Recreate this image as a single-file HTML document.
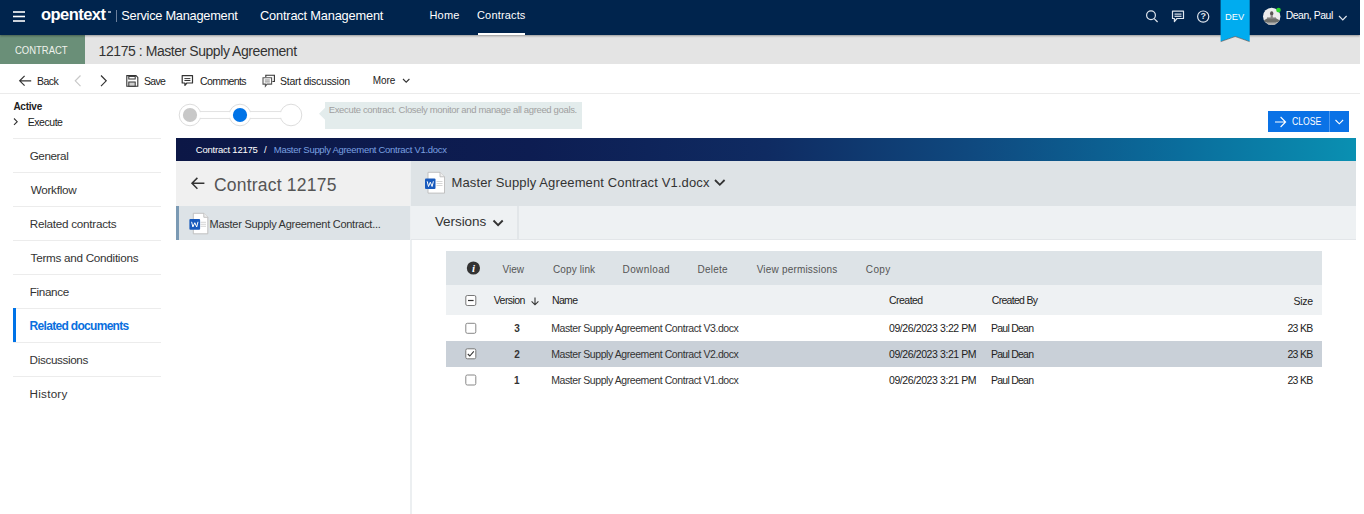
<!DOCTYPE html>
<html><head><meta charset="utf-8">
<style>
*{box-sizing:border-box;margin:0;padding:0}
html,body{width:1364px;height:514px;overflow:hidden;background:#fff;font-family:"Liberation Sans",sans-serif;color:#333}
.t{position:absolute;white-space:nowrap;line-height:normal}
.a{position:absolute}
svg{position:absolute;overflow:visible}
</style></head><body>
<div class="a" style="left:0;top:35px;width:1360px;height:29px;background:#e4e4e4"></div>
<div class="a" style="left:0;top:35px;width:85px;height:29px;background:#6a8f78"></div>
<!-- NAV -->
<div class="a" style="left:0;top:0;width:1360px;height:35px;background:#00244d;box-shadow:0 1px 2px rgba(0,0,0,.35)"></div>
<svg style="left:0;top:0" width="30" height="35"><g stroke="#fff" stroke-width="1.6"><line x1="13" y1="12" x2="25" y2="12"/><line x1="13" y1="16.5" x2="25" y2="16.5"/><line x1="13" y1="21" x2="25" y2="21"/></g></svg>
<div class="t" style="left:40.9px;top:4.57px;font-size:16.5px;font-weight:bold;letter-spacing:-0.52px;color:#fff;">opentext</div>
<div class="a" style="left:108px;top:11.2px;width:3px;height:1.6px;background:#9aa8bc"></div>
<div class="a" style="left:116px;top:9.5px;width:1px;height:12.5px;background:#6b7f9c"></div>
<div class="t" style="left:121.3px;top:7.62px;font-size:12.8px;font-weight:normal;letter-spacing:-0.26px;color:#fff;">Service Management</div>
<div class="t" style="left:260.0px;top:7.62px;font-size:12.8px;font-weight:normal;letter-spacing:-0.18px;color:#fff;">Contract Management</div>
<div class="t" style="left:429.4px;top:9.08px;font-size:11.0px;font-weight:normal;letter-spacing:0.23px;color:#fff;">Home</div>
<div class="t" style="left:477.0px;top:9.08px;font-size:11.0px;font-weight:normal;letter-spacing:0.16px;color:#fff;">Contracts</div>
<div class="a" style="left:478px;top:33px;width:47px;height:2px;background:#fff"></div>
<svg style="left:1140px;top:0" width="80" height="35" fill="none" stroke="#dfe6ee" stroke-width="1.2">
 <circle cx="11" cy="15.3" r="4.4"/><line x1="14.2" y1="18.6" x2="17.6" y2="22"/>
 <path d="M32.5 11.2h11v7.3h-6.5l-2.6 3v-3h-1.9z" stroke-linejoin="round"/>
 <line x1="34.5" y1="14.1" x2="41.5" y2="14.1"/><line x1="34.5" y1="16.3" x2="41.5" y2="16.3"/>
 <circle cx="63.2" cy="16.6" r="5.6"/>
</svg>
<div class="t" style="left:1200.6px;top:10.6px;font-size:9px;font-weight:bold;color:#dfe6ee">?</div>
<svg style="left:1215px;top:0" width="40" height="46"><polygon points="5.6,0 34.7,0 34.7,41.4 20.2,36.2 5.6,41.4" fill="#00acef"/><polyline points="5.8,41.6 20.2,36.5 34.5,41.6" fill="none" stroke="rgba(50,40,40,.55)" stroke-width="0.9"/></svg>
<div class="t" style="left:1224.83px;top:10.97px;font-size:9.6px;font-weight:normal;letter-spacing:0px;color:#fff;transform:scaleX(0.9684);transform-origin:0 0;">DEV</div>
<svg style="left:1258px;top:3px" width="30" height="26">
 <defs><clipPath id="av"><circle cx="13.7" cy="13.4" r="8.7"/></clipPath></defs>
 <g clip-path="url(#av)">
  <rect x="0" y="0" width="30" height="26" fill="#ececec"/>
  <rect x="9" y="14" width="9" height="10" fill="#b0b0ae"/>
  <path d="M5.5 17.5l4-2.2h8.5l4 2.2v2h-16.5z" fill="#6f706c"/>
  <ellipse cx="13.7" cy="10.5" rx="1.7" ry="2.3" fill="#5a5654"/>
  <rect x="12.6" y="12.5" width="2.2" height="3" fill="#8a8684"/>
 </g>
 <circle cx="20.5" cy="7.1" r="2.3" fill="#2bd62b"/>
</svg>
<div class="t" style="left:1285.7px;top:10.33px;font-size:10.4px;font-weight:normal;letter-spacing:-0.43px;color:#fff;">Dean, Paul</div>
<svg style="left:1338px;top:14px" width="10" height="8" fill="none" stroke="#e0e6ee" stroke-width="1.2"><path d="M1 2l3.8 3.8L8.6 2"/></svg>
<!-- BAND -->
<div class="t" style="left:15.14px;top:43.88px;font-size:11.0px;font-weight:normal;letter-spacing:0px;color:#eef2ec;transform:scaleX(0.8617);transform-origin:0 0;">CONTRACT</div>
<div class="t" style="left:98.6px;top:42.62px;font-size:14.0px;font-weight:normal;letter-spacing:-0.44px;color:#333;">12175 : Master Supply Agreement</div>
<!-- TOOLBAR -->
<div class="a" style="left:0;top:93px;width:1360px;height:1px;background:#ebebeb"></div>
<svg style="left:0;top:64px" width="420" height="30" fill="none" stroke="#333" stroke-width="1.2">
 <path d="M19.8 16.8h11.4M24.6 11.9l-4.9 4.9 4.9 4.9"/>
 <path d="M80.5 11.5l-5.2 5.3 5.2 5.3" stroke="#c8c8c8"/>
 <path d="M101 11.5l5.2 5.3-5.2 5.3"/>
 <path d="M126.8 11.6h9.2l1.8 1.8v8.9h-11z" stroke-width="1.1"/>
 <rect x="128.8" y="12.4" width="6.4" height="2.6" stroke-width="1"/>
 <rect x="128.8" y="18" width="6.4" height="4.2" stroke-width="1" fill="#d0d0d0"/>
 <path d="M182.2 11.6h10.3v7.4h-5.6l-2 2.4v-2.4h-2.7z" stroke-linejoin="round"/>
 <line x1="184.4" y1="14.6" x2="190.4" y2="14.6" stroke-width="1"/><line x1="184.4" y1="16.5" x2="190.4" y2="16.5" stroke-width="1"/>
 <path d="M265.8 13.3v-2h8.6v6.2h-2" stroke-width="1.1"/>
 <path d="M263 13.8h8.6v6.3h-4.6l-1.6 2v-2h-2.4z" stroke-width="1.1" stroke="#555"/>
 <line x1="264.8" y1="16" x2="269.8" y2="16" stroke-width="0.9" stroke="#777"/><line x1="264.8" y1="17.9" x2="269.8" y2="17.9" stroke-width="0.9" stroke="#777"/>
 <path d="M403 15l3.2 3.2 3.2-3.2" stroke-width="1.1"/>
</svg>
<div class="t" style="left:37.0px;top:75.04px;font-size:10.5px;font-weight:normal;letter-spacing:-0.53px;color:#222;">Back</div>
<div class="t" style="left:144.0px;top:75.04px;font-size:10.5px;font-weight:normal;letter-spacing:-0.7px;color:#222;">Save</div>
<div class="t" style="left:200.1px;top:74.84px;font-size:10.5px;font-weight:normal;letter-spacing:-0.61px;color:#222;">Comments</div>
<div class="t" style="left:280.0px;top:74.84px;font-size:10.5px;font-weight:normal;letter-spacing:-0.27px;color:#222;">Start discussion</div>
<div class="t" style="left:372.7px;top:75.2px;font-size:10.0px;font-weight:normal;letter-spacing:-0.07px;color:#222;">More</div>
<!-- SIDE -->
<div class="t" style="left:13.4px;top:100.55px;font-size:10.0px;font-weight:bold;letter-spacing:-0.24px;color:#222;">Active</div>
<svg style="left:0;top:110px" width="30" height="20" fill="none" stroke="#333" stroke-width="1.1"><path d="M14 8.5l3.2 3.2-3.2 3.2"/></svg>
<div class="t" style="left:27.75px;top:115.74px;font-size:10.5px;font-weight:normal;letter-spacing:-0.46px;color:#222;">Execute</div>
<div class="a" style="left:13px;top:138px;width:148px;height:1px;background:#ececec"></div>
<div class="a" style="left:13px;top:172px;width:148px;height:1px;background:#ececec"></div>
<div class="a" style="left:13px;top:206px;width:148px;height:1px;background:#ececec"></div>
<div class="a" style="left:13px;top:240px;width:148px;height:1px;background:#ececec"></div>
<div class="a" style="left:13px;top:274px;width:148px;height:1px;background:#ececec"></div>
<div class="a" style="left:13px;top:308px;width:148px;height:1px;background:#ececec"></div>
<div class="a" style="left:13px;top:342px;width:148px;height:1px;background:#ececec"></div>
<div class="a" style="left:13px;top:376px;width:148px;height:1px;background:#ececec"></div>
<div class="a" style="left:13px;top:308px;width:3px;height:34px;background:#0073e7"></div>
<div class="t" style="left:29.7px;top:148.74px;font-size:11.7px;font-weight:normal;letter-spacing:-0.42px;color:#333;">General</div>
<div class="t" style="left:30.7px;top:182.74px;font-size:11.7px;font-weight:normal;letter-spacing:-0.27px;color:#333;">Workflow</div>
<div class="t" style="left:29.7px;top:216.74px;font-size:11.7px;font-weight:normal;letter-spacing:-0.25px;color:#333;">Related contracts</div>
<div class="t" style="left:30.6px;top:250.74px;font-size:11.7px;font-weight:normal;letter-spacing:-0.27px;color:#333;">Terms and Conditions</div>
<div class="t" style="left:29.8px;top:284.74px;font-size:11.7px;font-weight:normal;letter-spacing:-0.37px;color:#333;">Finance</div>
<div class="t" style="left:29.6px;top:319.06px;font-size:12.0px;font-weight:bold;letter-spacing:-0.69px;color:#0a6fde;">Related documents</div>
<div class="t" style="left:29.6px;top:352.74px;font-size:11.7px;font-weight:normal;letter-spacing:-0.36px;color:#333;">Discussions</div>
<div class="t" style="left:29.6px;top:386.74px;font-size:11.7px;font-weight:normal;letter-spacing:0.23px;color:#333;">History</div>
<!-- STEPPER -->
<svg style="left:170px;top:98px" width="150" height="34">
 <path d="M20 13.7h50 M20 20.3h50 M70 13.7h51 M70 20.3h51" stroke="#ddd" stroke-width="1" fill="none"/>
 <circle cx="20" cy="17" r="10.8" fill="#fff" stroke="#ddd" stroke-width="1"/>
 <circle cx="70" cy="17" r="10.8" fill="#fff" stroke="#ddd" stroke-width="1"/>
 <circle cx="121" cy="17" r="10.8" fill="#fff" stroke="#ddd" stroke-width="1"/>
 <rect x="29" y="14.2" width="32" height="5.6" fill="#fff"/>
 <rect x="79" y="14.2" width="33" height="5.6" fill="#fff"/>
 <circle cx="20" cy="17" r="7.1" fill="#c8c8c8"/>
 <circle cx="70" cy="17" r="7.1" fill="#0073e7"/>
</svg>
<div class="a" style="left:325px;top:102px;width:256.5px;height:27px;background:#e3ecec"></div>
<div class="a" style="left:319px;top:107.8px;width:6px;height:12px;background:#e3ecec;clip-path:polygon(100% 0,0 50%,100% 100%)"></div>
<div class="t" style="left:328.7px;top:104.06px;font-size:9.5px;font-weight:normal;letter-spacing:-0.34px;color:#a0a0a0;">Execute contract. Closely monitor and manage all agreed goals.</div>
<!-- CLOSE -->
<div class="a" style="left:1268px;top:110.5px;width:81px;height:21px;background:#0a72e6"></div>
<div class="a" style="left:1328.5px;top:110.5px;width:1px;height:21px;background:#4d9af0"></div>
<svg style="left:1268px;top:110px" width="81" height="22" fill="none" stroke="#fff" stroke-width="1.1">
 <path d="M7 12h10.5M12.6 7l5 5-5 5"/>
 <path d="M67.5 10l3.8 3.8 3.8-3.8"/>
</svg>
<div class="t" style="left:1291.6px;top:116.3px;font-size:10.0px;font-weight:normal;letter-spacing:0px;color:#fff;transform:scaleX(0.8647);transform-origin:0 0;">CLOSE</div>
<!-- CRUMB -->
<div class="a" style="left:176px;top:138px;width:1180px;height:23px;background:linear-gradient(90deg,#0c1746 0%,#0d1d52 30%,#0f2b62 50%,#0f4a80 68%,#0a6d9c 85%,#0a90b2 100%)"></div>
<div class="t" style="left:195.8px;top:144.16px;font-size:9.5px;font-weight:normal;letter-spacing:-0.22px;color:#fff;">Contract 12175</div>
<div class="t" style="left:264.0px;top:144.16px;font-size:9.5px;font-weight:normal;letter-spacing:0px;color:#fff;">/</div>
<div class="t" style="left:273.8px;top:144.16px;font-size:9.5px;font-weight:normal;letter-spacing:-0.3px;color:#7aa0e0;">Master Supply Agreement Contract V1.docx</div>
<!-- LEFT PANE -->
<div class="a" style="left:176px;top:161px;width:234px;height:45px;background:#f0f0f0"></div>
<div class="a" style="left:176px;top:206px;width:234px;height:34px;background:#dde3e7"></div>
<div class="a" style="left:176px;top:206px;width:3px;height:34px;background:#7b9ab4"></div>
<svg style="left:185px;top:165px" width="30" height="35" fill="none" stroke="#333" stroke-width="1.5"><path d="M7 18.3h12.4M12.4 12.9l-5.4 5.4 5.4 5.4"/></svg>
<div class="t" style="left:213.9px;top:174.6px;font-size:17.5px;font-weight:normal;letter-spacing:0.22px;color:#555;">Contract 12175</div>
<svg style="left:188px;top:212px" width="24" height="24">
 <path d="M5.3 1.3h10.5l4 4v16.5h-14.5z" fill="#fff" stroke="#bbb" stroke-width="0.9"/>
 <path d="M15.8 1.3v4h4" fill="#eee" stroke="#bbb" stroke-width="0.9"/>
 <g stroke="#ccc" stroke-width="0.8"><line x1="12.5" y1="10.3" x2="18" y2="10.3"/><line x1="12.5" y1="12.3" x2="18" y2="12.3"/><line x1="12.5" y1="14.3" x2="18" y2="14.3"/></g>
 <rect x="1.4" y="7" width="10.7" height="10.8" rx="1" fill="#185abd"/>
 <path d="M3.6 9.8l1.3 5.2 1.9-4.3 1.9 4.3 1.3-5.2" fill="none" stroke="#fff" stroke-width="1"/>
</svg>
<div class="t" style="left:209.6px;top:217.58px;font-size:11.0px;font-weight:normal;letter-spacing:-0.27px;color:#333;">Master Supply Agreement Contract...</div>
<div class="a" style="left:410px;top:161px;width:2px;height:353px;background:#eceff1"></div>
<!-- RIGHT PANE -->
<div class="a" style="left:411px;top:161px;width:945px;height:45px;background:#dee3e6"></div>
<div class="a" style="left:411px;top:206px;width:945px;height:34px;background:#eef1f3"></div>
<div class="a" style="left:411px;top:238.5px;width:945px;height:1.5px;background:#e3e6e9"></div>
<div class="a" style="left:517px;top:206px;width:1.5px;height:33px;background:#e2e6e9"></div>
<svg style="left:424px;top:171px" width="24" height="24">
 <path d="M4 1.3h12l4.5 4.5v16.3h-16.5z" fill="#fff" stroke="#bbb" stroke-width="0.9"/>
 <path d="M16 1.3v4.5h4.5" fill="#eee" stroke="#bbb" stroke-width="0.9"/>
 <g stroke="#ccc" stroke-width="0.8"><line x1="12.5" y1="10.5" x2="18.5" y2="10.5"/><line x1="12.5" y1="12.5" x2="18.5" y2="12.5"/><line x1="12.5" y1="14.5" x2="18.5" y2="14.5"/></g>
 <rect x="1" y="7.5" width="10.5" height="10.5" rx="1" fill="#185abd"/>
 <path d="M3.2 10.3l1.3 5.2 1.8-4.3 1.8 4.3 1.3-5.2" fill="none" stroke="#fff" stroke-width="1"/>
</svg>
<div class="t" style="left:451.5px;top:175.34px;font-size:13.0px;font-weight:normal;letter-spacing:0.13px;color:#333;">Master Supply Agreement Contract V1.docx</div>
<svg style="left:710px;top:175px" width="20" height="15" fill="none" stroke="#333" stroke-width="1.8"><path d="M5 5l4.8 4.8 4.8-4.8"/></svg>
<div class="t" style="left:434.9px;top:214.48px;font-size:13.5px;font-weight:normal;letter-spacing:-0.06px;color:#333;">Versions</div>
<svg style="left:490px;top:215px" width="16" height="15" fill="none" stroke="#333" stroke-width="1.9"><path d="M3.5 5.5l4.6 4.6 4.6-4.6"/></svg>
<!-- TABLE -->
<div class="a" style="left:446px;top:251px;width:876px;height:34px;background:#dde3e7"></div>
<div class="a" style="left:446px;top:285px;width:876px;height:30px;background:#eef1f3"></div>
<div class="a" style="left:446px;top:340.5px;width:876px;height:26px;background:#c9d0d8"></div>
<svg style="left:446px;top:251px" width="100" height="150">
 <circle cx="27.4" cy="17" r="6.6" fill="#333"/>
 <text x="27.6" y="21.3" font-family="Liberation Serif" font-style="italic" font-weight="bold" font-size="11" fill="#fff" text-anchor="middle">i</text>
 <rect x="19.8" y="44.5" width="10" height="10" rx="1.5" fill="#fff" stroke="#777" stroke-width="1"/>
 <line x1="22" y1="49.5" x2="27.6" y2="49.5" stroke="#333" stroke-width="1.2"/>
 <path d="M89 46.5v7.2M85.6 50.4l3.4 3.4 3.4-3.4" fill="none" stroke="#333" stroke-width="1.1"/>
 <rect x="19.8" y="72.3" width="10" height="10" rx="1.5" fill="#fff" stroke="#888" stroke-width="1"/>
 <rect x="19.8" y="97.8" width="10" height="10" rx="1.5" fill="#fff" stroke="#777" stroke-width="1"/>
 <path d="M21.8 103l2 2 4-4.6" fill="none" stroke="#333" stroke-width="1.1"/>
 <rect x="19.8" y="124" width="10" height="10" rx="1.5" fill="#fff" stroke="#888" stroke-width="1"/>
</svg>
<div class="t" style="left:502.5px;top:264.0px;font-size:10.0px;font-weight:normal;letter-spacing:-0.03px;color:#555;">View</div>
<div class="t" style="left:553.0px;top:264.0px;font-size:10.0px;font-weight:normal;letter-spacing:0.12px;color:#555;">Copy link</div>
<div class="t" style="left:622.6px;top:264.0px;font-size:10.0px;font-weight:normal;letter-spacing:0.37px;color:#555;">Download</div>
<div class="t" style="left:697.6px;top:264.0px;font-size:10.0px;font-weight:normal;letter-spacing:0.22px;color:#555;">Delete</div>
<div class="t" style="left:756.7px;top:264.0px;font-size:10.0px;font-weight:normal;letter-spacing:0.19px;color:#555;">View permissions</div>
<div class="t" style="left:865.8px;top:264.0px;font-size:10.0px;font-weight:normal;letter-spacing:0.37px;color:#555;">Copy</div>
<div class="t" style="left:493.75px;top:294.34px;font-size:10.5px;font-weight:normal;letter-spacing:-0.56px;color:#222;">Version</div>
<div class="t" style="left:552.0px;top:294.34px;font-size:10.5px;font-weight:normal;letter-spacing:-0.67px;color:#222;">Name</div>
<div class="t" style="left:889.0px;top:294.34px;font-size:10.5px;font-weight:normal;letter-spacing:-0.53px;color:#222;">Created</div>
<div class="t" style="left:991.8px;top:294.34px;font-size:10.5px;font-weight:normal;letter-spacing:-0.7px;color:#222;">Created By</div>
<div class="t" style="left:1293.5px;top:294.54px;font-size:10.5px;font-weight:normal;letter-spacing:-0.3px;color:#222;">Size</div>
<div class="t" style="left:514.3px;top:323.0px;font-size:10.0px;font-weight:bold;letter-spacing:0px;color:#333;">3</div><div class="t" style="left:551.3px;top:321.84px;font-size:10.5px;font-weight:normal;letter-spacing:-0.43px;color:#333;">Master Supply Agreement Contract V3.docx</div><div class="t" style="left:889.0px;top:321.84px;font-size:10.5px;font-weight:normal;letter-spacing:-0.41px;color:#222;">09/26/2023 3:22 PM</div><div class="t" style="left:991.0px;top:321.84px;font-size:10.5px;font-weight:normal;letter-spacing:-0.75px;color:#222;">Paul Dean</div><div class="t" style="left:1287.4px;top:321.84px;font-size:10.5px;font-weight:normal;letter-spacing:-0.7px;color:#222;">23 KB</div>
<div class="t" style="left:514.3px;top:349.2px;font-size:10.0px;font-weight:bold;letter-spacing:0px;color:#333;">2</div><div class="t" style="left:551.3px;top:348.04px;font-size:10.5px;font-weight:normal;letter-spacing:-0.43px;color:#333;">Master Supply Agreement Contract V2.docx</div><div class="t" style="left:889.0px;top:348.04px;font-size:10.5px;font-weight:normal;letter-spacing:-0.41px;color:#222;">09/26/2023 3:21 PM</div><div class="t" style="left:991.0px;top:348.04px;font-size:10.5px;font-weight:normal;letter-spacing:-0.75px;color:#222;">Paul Dean</div><div class="t" style="left:1287.4px;top:348.04px;font-size:10.5px;font-weight:normal;letter-spacing:-0.7px;color:#222;">23 KB</div>
<div class="t" style="left:514.0px;top:374.8px;font-size:10.0px;font-weight:bold;letter-spacing:0px;color:#333;">1</div><div class="t" style="left:551.3px;top:373.64px;font-size:10.5px;font-weight:normal;letter-spacing:-0.43px;color:#333;">Master Supply Agreement Contract V1.docx</div><div class="t" style="left:889.0px;top:373.64px;font-size:10.5px;font-weight:normal;letter-spacing:-0.41px;color:#222;">09/26/2023 3:21 PM</div><div class="t" style="left:991.0px;top:373.64px;font-size:10.5px;font-weight:normal;letter-spacing:-0.75px;color:#222;">Paul Dean</div><div class="t" style="left:1287.4px;top:373.64px;font-size:10.5px;font-weight:normal;letter-spacing:-0.7px;color:#222;">23 KB</div>
<div class="a" style="left:1360px;top:0;width:4px;height:514px;background:#fff"></div>

</body></html>
